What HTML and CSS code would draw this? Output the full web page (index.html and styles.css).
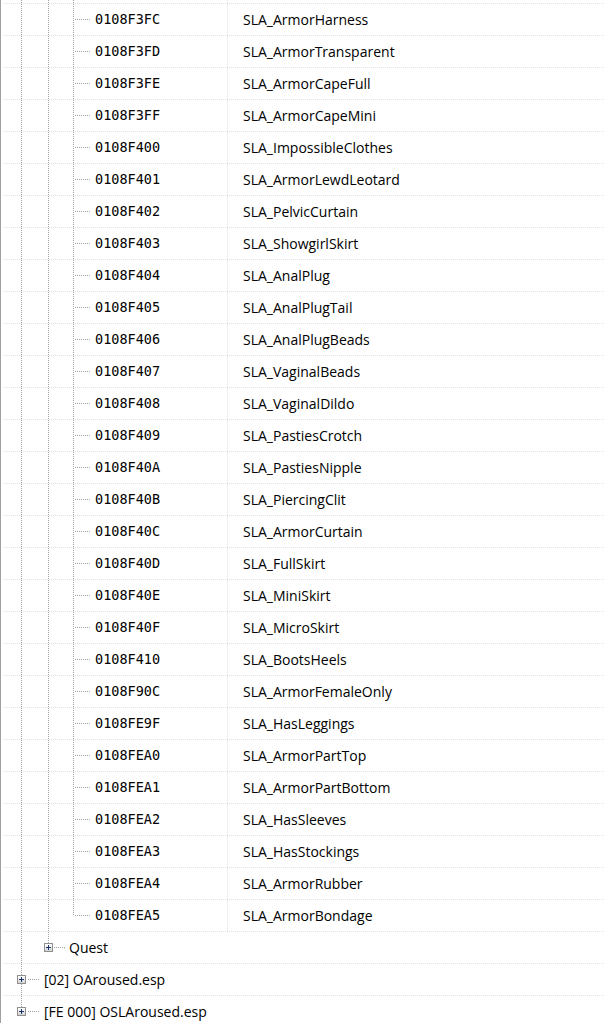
FILE: index.html
```html
<!DOCTYPE html>
<html>
<head>
<meta charset="utf-8">
<link rel="stylesheet" href="styles.css">
</head>
<body>
<div class="tree">
  <div class="row stub"><span class="g c1 line"></span><span class="g c2 line"></span><span class="g c3 line"></span><span class="id"></span><span class="name"></span></div>
  <div class="row"><span class="g c1 line"></span><span class="g c2 line"></span><span class="g c3 line conn"></span><span class="id">0108F3FC</span><span class="name">SLA_ArmorHarness</span></div>
  <div class="row"><span class="g c1 line"></span><span class="g c2 line"></span><span class="g c3 line conn"></span><span class="id">0108F3FD</span><span class="name">SLA_ArmorTransparent</span></div>
  <div class="row"><span class="g c1 line"></span><span class="g c2 line"></span><span class="g c3 line conn"></span><span class="id">0108F3FE</span><span class="name">SLA_ArmorCapeFull</span></div>
  <div class="row"><span class="g c1 line"></span><span class="g c2 line"></span><span class="g c3 line conn"></span><span class="id">0108F3FF</span><span class="name">SLA_ArmorCapeMini</span></div>
  <div class="row"><span class="g c1 line"></span><span class="g c2 line"></span><span class="g c3 line conn"></span><span class="id">0108F400</span><span class="name">SLA_ImpossibleClothes</span></div>
  <div class="row"><span class="g c1 line"></span><span class="g c2 line"></span><span class="g c3 line conn"></span><span class="id">0108F401</span><span class="name">SLA_ArmorLewdLeotard</span></div>
  <div class="row"><span class="g c1 line"></span><span class="g c2 line"></span><span class="g c3 line conn"></span><span class="id">0108F402</span><span class="name">SLA_PelvicCurtain</span></div>
  <div class="row"><span class="g c1 line"></span><span class="g c2 line"></span><span class="g c3 line conn"></span><span class="id">0108F403</span><span class="name">SLA_ShowgirlSkirt</span></div>
  <div class="row"><span class="g c1 line"></span><span class="g c2 line"></span><span class="g c3 line conn"></span><span class="id">0108F404</span><span class="name">SLA_AnalPlug</span></div>
  <div class="row"><span class="g c1 line"></span><span class="g c2 line"></span><span class="g c3 line conn"></span><span class="id">0108F405</span><span class="name">SLA_AnalPlugTail</span></div>
  <div class="row"><span class="g c1 line"></span><span class="g c2 line"></span><span class="g c3 line conn"></span><span class="id">0108F406</span><span class="name">SLA_AnalPlugBeads</span></div>
  <div class="row"><span class="g c1 line"></span><span class="g c2 line"></span><span class="g c3 line conn"></span><span class="id">0108F407</span><span class="name">SLA_VaginalBeads</span></div>
  <div class="row"><span class="g c1 line"></span><span class="g c2 line"></span><span class="g c3 line conn"></span><span class="id">0108F408</span><span class="name">SLA_VaginalDildo</span></div>
  <div class="row"><span class="g c1 line"></span><span class="g c2 line"></span><span class="g c3 line conn"></span><span class="id">0108F409</span><span class="name">SLA_PastiesCrotch</span></div>
  <div class="row"><span class="g c1 line"></span><span class="g c2 line"></span><span class="g c3 line conn"></span><span class="id">0108F40A</span><span class="name">SLA_PastiesNipple</span></div>
  <div class="row"><span class="g c1 line"></span><span class="g c2 line"></span><span class="g c3 line conn"></span><span class="id">0108F40B</span><span class="name">SLA_PiercingClit</span></div>
  <div class="row"><span class="g c1 line"></span><span class="g c2 line"></span><span class="g c3 line conn"></span><span class="id">0108F40C</span><span class="name">SLA_ArmorCurtain</span></div>
  <div class="row"><span class="g c1 line"></span><span class="g c2 line"></span><span class="g c3 line conn"></span><span class="id">0108F40D</span><span class="name">SLA_FullSkirt</span></div>
  <div class="row"><span class="g c1 line"></span><span class="g c2 line"></span><span class="g c3 line conn"></span><span class="id">0108F40E</span><span class="name">SLA_MiniSkirt</span></div>
  <div class="row"><span class="g c1 line"></span><span class="g c2 line"></span><span class="g c3 line conn"></span><span class="id">0108F40F</span><span class="name">SLA_MicroSkirt</span></div>
  <div class="row"><span class="g c1 line"></span><span class="g c2 line"></span><span class="g c3 line conn"></span><span class="id">0108F410</span><span class="name">SLA_BootsHeels</span></div>
  <div class="row"><span class="g c1 line"></span><span class="g c2 line"></span><span class="g c3 line conn"></span><span class="id">0108F90C</span><span class="name">SLA_ArmorFemaleOnly</span></div>
  <div class="row"><span class="g c1 line"></span><span class="g c2 line"></span><span class="g c3 line conn"></span><span class="id">0108FE9F</span><span class="name">SLA_HasLeggings</span></div>
  <div class="row"><span class="g c1 line"></span><span class="g c2 line"></span><span class="g c3 line conn"></span><span class="id">0108FEA0</span><span class="name">SLA_ArmorPartTop</span></div>
  <div class="row"><span class="g c1 line"></span><span class="g c2 line"></span><span class="g c3 line conn"></span><span class="id">0108FEA1</span><span class="name">SLA_ArmorPartBottom</span></div>
  <div class="row"><span class="g c1 line"></span><span class="g c2 line"></span><span class="g c3 line conn"></span><span class="id">0108FEA2</span><span class="name">SLA_HasSleeves</span></div>
  <div class="row"><span class="g c1 line"></span><span class="g c2 line"></span><span class="g c3 line conn"></span><span class="id">0108FEA3</span><span class="name">SLA_HasStockings</span></div>
  <div class="row"><span class="g c1 line"></span><span class="g c2 line"></span><span class="g c3 line conn"></span><span class="id">0108FEA4</span><span class="name">SLA_ArmorRubber</span></div>
  <div class="row"><span class="g c1 line"></span><span class="g c2 line"></span><span class="g c3 half conn"></span><span class="id">0108FEA5</span><span class="name">SLA_ArmorBondage</span></div>
  <div class="row"><span class="g c1 line"></span><span class="g cq half"><span class="tog"></span></span><span class="label">Quest</span></div>
  <div class="row"><span class="g ct line"><span class="tog"></span></span><span class="label">[02] OAroused.esp</span></div>
  <div class="row"><span class="g ct half"><span class="tog"></span></span><span class="label">[FE 000] OSLAroused.esp</span></div>
</div>
</body>
</html>
```
FILE: styles.css
```css
html, body {
  margin: 0;
  padding: 0;
  background: #ffffff;
}

body {
  width: 605px;
  height: 1023px;
  overflow: hidden;
}

.tree {
  --tree: #a3a3a3;
  --sep: #e1e1e1;
  --vdot: repeating-linear-gradient(to bottom, var(--tree) 0 1px, transparent 1px 2px);
  --hdot: repeating-linear-gradient(to right, var(--tree) 0 1px, transparent 1px 2px);
  height: 1023px;
  box-sizing: border-box;
  border-left: 1px solid #a0a0a0;
  font-family: "Open Sans", "Noto Sans", sans-serif;
  font-size: 14px;
  color: #000000;
}

.row {
  display: flex;
  height: 32px;
  background: repeating-linear-gradient(to right, var(--sep) 0 1px, transparent 1px 2px) 2px 100% / 100% 1px no-repeat;
}

.row.stub {
  height: 4px;
}

.g {
  flex: none;
  display: flex;
  align-items: center;
  box-sizing: border-box;
  padding-bottom: 1px;
  --lx: 0px;
}

.c1 { width: 34px; --lx: 20px; }
.c2 { width: 26px; --lx: 13px; }
.c3 { width: 34px; --lx: 12px; }
.cq { width: 34px; --lx: 13px; padding-left: 9px; }
.ct { width: 43px; --lx: 20px; padding-left: 16px; }

.g.line {
  background: var(--vdot) var(--lx) 0 / 1px 100% no-repeat;
}

.g.half {
  background: var(--vdot) var(--lx) 0 / 1px 16px no-repeat;
}

.c3.line.conn {
  background:
    var(--hdot) 14px 15px / 15px 1px no-repeat,
    var(--vdot) var(--lx) 0 / 1px 100% no-repeat;
}

.c3.half.conn {
  background:
    var(--hdot) 14px 15px / 15px 1px no-repeat,
    var(--vdot) var(--lx) 0 / 1px 16px no-repeat;
}

.cq.half {
  background:
    var(--hdot) 19px 15px / 11px 1px no-repeat,
    var(--vdot) var(--lx) 0 / 1px 16px no-repeat;
}

.ct.line {
  background:
    var(--hdot) 27px 15px / 11px 1px no-repeat,
    var(--vdot) var(--lx) 0 / 1px 100% no-repeat;
}

.ct.half {
  background:
    var(--hdot) 27px 15px / 11px 1px no-repeat,
    var(--vdot) var(--lx) 0 / 1px 16px no-repeat;
}

.tog {
  width: 9px;
  height: 9px;
  box-sizing: border-box;
  border: 1px solid #8f8f8f;
  background:
    linear-gradient(#1c3567, #1c3567) 1px 3px / 5px 1px no-repeat,
    linear-gradient(#1c3567, #1c3567) 3px 1px / 1px 5px no-repeat,
    linear-gradient(#ffffff, #d4d4d4);
}

.id {
  flex: none;
  width: 132px;
  font-family: "DejaVu Sans Mono", monospace;
  font-size: 13.5px;
  line-height: 31px;
  white-space: nowrap;
}

.name {
  flex: 1;
  padding-left: 16px;
  line-height: 31px;
  white-space: nowrap;
  background: repeating-linear-gradient(to bottom, #e3e3e3 0 1px, transparent 1px 2px) 0 0 / 1px 100% no-repeat;
}

.label {
  flex: none;
  line-height: 31px;
  white-space: nowrap;
}
```
